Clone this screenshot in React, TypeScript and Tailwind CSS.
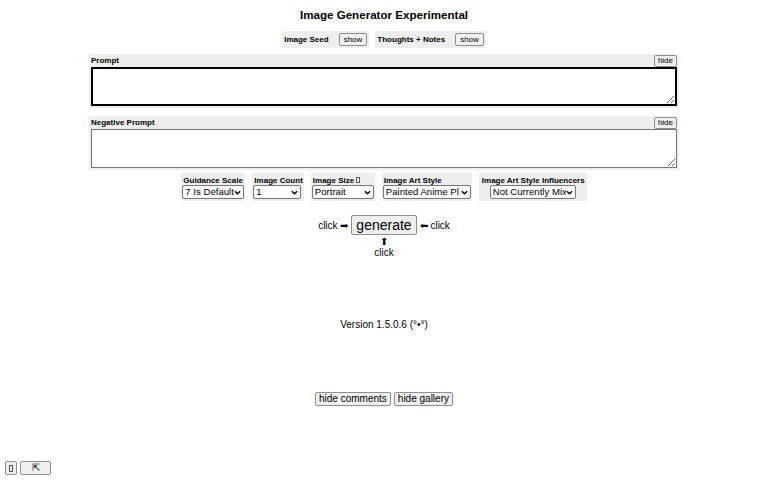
import React from "react";

const btn =
  "bg-[#efefef] border border-[#8f8f8f] rounded-[2px] text-black leading-none";

const Tofu = () => (
  <span className="inline-block w-[4px] h-[6px] border border-[#555] align-[0px] ml-[2px]" />
);

const Chevron = () => (
  <svg
    viewBox="0 0 8 5"
    className="absolute right-[3px] top-[5px] w-[7px] h-[5px] pointer-events-none"
  >
    <path d="M1 1 L4 4 L7 1" fill="none" stroke="black" strokeWidth="1.6" />
  </svg>
);

const Select = ({ width, value }: { width: string; value: string }) => (
  <div className={`relative flex ${width}`}>
    <select
      className="w-full h-[14px] text-[9.6px] leading-none border border-[#767676] rounded-[2px] bg-white pl-[2px] pr-[9px] py-0 appearance-none overflow-hidden whitespace-nowrap"
      defaultValue={value}
    >
      <option>{value}</option>
    </select>
    <Chevron />
  </div>
);

const Field = ({ label, width, value, tofu, center }: { label: string; width: string; value: string; tofu?: boolean; center?: boolean }) => (
  <div className={`bg-[#eeeeee] pt-[3px] pb-[2px] flex flex-col ${center ? "items-center px-[2px]" : "items-start px-[1px]"}`}>
    <div className="text-[8px] font-bold leading-[9px] pl-[1px]">
      {label}
      {tofu && <Tofu />}
    </div>
    <Select width={width} value={value} />
  </div>
);

const PromptBox = ({ label, focused }: { label: string; focused?: boolean }) => (
  <div className="bg-[#eeeeee] w-[590px] px-[2px] pt-[1px] pb-[2px]">
    <div className="flex justify-between items-end h-[12px]">
      <span className="text-[8px] font-bold leading-none pb-[2px]">{label}</span>
      <button className={`${btn} text-[8px] px-[3px] h-[12px]`}>hide</button>
    </div>
    <textarea
      className={`block w-full h-[39px] bg-white resize-y ${
        focused ? "border-2 border-black" : "border border-[#767676]"
      }`}
    />
  </div>
);

export default function App() {
  return (
    <div
      className="w-[768px] h-[480px] bg-white text-black relative"
      style={{ fontFamily: '"Liberation Sans", Arial, sans-serif' }}
    >
      <div className="flex flex-col items-center">
        <h1 className="text-[11.6px] font-bold mt-[7px] leading-[15px]">Image Generator Experimental</h1>

        <div className="flex gap-[6px] mt-[9px]">
          <div className="bg-[#eeeeee] flex items-center gap-[10px] pl-[2px] pr-[2px] h-[17px]">
            <span className="text-[8px] font-bold">Image Seed</span>
            <button className={`${btn} text-[8px] px-[4px] h-[13px]`}>show</button>
          </div>
          <div className="bg-[#eeeeee] flex items-center gap-[10px] pl-[2px] pr-[2px] h-[17px]">
            <span className="text-[8px] font-bold">Thoughts + Notes</span>
            <button className={`${btn} text-[8px] px-[4px] h-[13px]`}>show</button>
          </div>
        </div>

        <div className="mt-[6px]">
          <PromptBox label="Prompt" focused />
        </div>
        <div className="mt-[8px]">
          <PromptBox label="Negative Prompt" />
        </div>

        <div className="flex gap-[7px] mt-[3px] items-start">
          <Field label="Guidance Scale" width="w-[62px]" value="7 Is Default" />
          <Field label="Image Count" width="w-[48px]" value="1" />
          <Field label="Image Size" width="w-[62px]" value="Portrait" tofu />
          <Field label="Image Art Style" width="w-[88px]" value="Painted Anime Pl" />
          <Field label="Image Art Style Influencers" width="w-[86px]" value="Not Currently Mix" center />
        </div>

        <div className="flex items-center gap-[2px] mt-[14px] text-[10px]">
          <span>click ➡</span>
          <button className={`${btn} text-[14px] px-[4px] h-[20px] mx-[1px]`}>generate</button>
          <span>⬅ click</span>
        </div>
        <div className="flex flex-col items-center text-[10px] leading-[11px] mt-[1px]">
          <span>⬆</span>
          <span>click</span>
        </div>

        <div className="text-[10px] mt-[59px]">Version 1.5.0.6 (°•°)</div>

        <div className="flex gap-[3px] mt-[60px]">
          <button className={`${btn} text-[10px] px-[3px] h-[14px]`}>hide comments</button>
          <button className={`${btn} text-[10px] px-[3px] h-[14px]`}>hide gallery</button>
        </div>
      </div>

      <div className="absolute left-[5px] top-[461px] flex gap-[3px]">
        <button className={`${btn} w-[12px] h-[14px] flex items-center justify-center`}>
          <span className="inline-block w-[4px] h-[7px] border border-[#555]" />
        </button>
        <button className={`${btn} text-[10px] w-[31px] h-[14px]`}>⇱</button>
      </div>
    </div>
  );
}
